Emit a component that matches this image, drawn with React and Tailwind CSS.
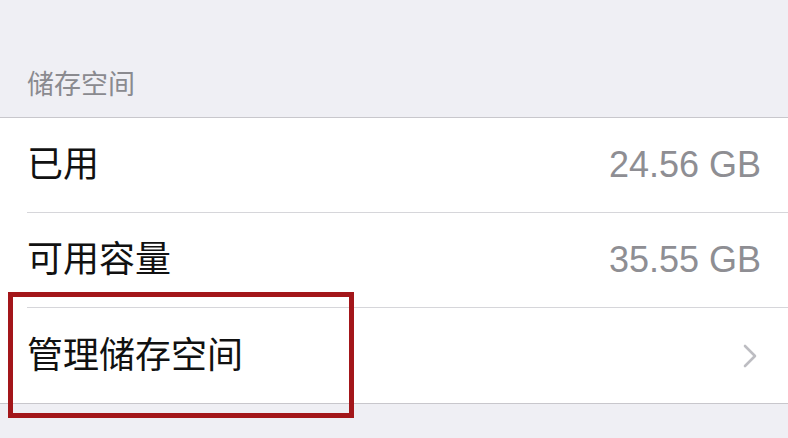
import React from 'react';

const rows = [
  { label: '已用', value: '24.56 GB' },
  { label: '可用容量', value: '35.55 GB' },
  { label: '管理储存空间', chevron: true },
];

const App = () => {
  return (
    <div
      className="relative w-[788px] h-[438px] overflow-hidden bg-[#efeff4]"
      style={{ fontFamily: '"Liberation Sans", "Noto Sans CJK SC", sans-serif' }}
    >
      <div className="h-[117px] flex items-end pl-[27px] pb-[16px]">
        <span className="text-[27px] leading-[32px] text-[#8a8a8f]">储存空间</span>
      </div>

      <div className="bg-white border-y border-[#c8c7cc]">
        {rows.map((row, i) => (
          <div key={row.label} className="pl-[27px]">
            <div
              className={`h-[95px] flex items-center justify-between pr-[27px] ${
                i < rows.length - 1 ? 'border-b border-[#d6d6da]' : ''
              }`}
            >
              <span className="text-[36px] leading-none text-[#111]">{row.label}</span>
              {row.chevron ? (
                <svg width="16" height="26" viewBox="0 0 16 26" className="mr-[3px]">
                  <path d="M3 3 L13 13 L3 23" fill="none" stroke="#bdbdc2" strokeWidth="2.6" strokeLinecap="round" strokeLinejoin="round" />
                </svg>
              ) : (
                <span className="text-[36px] leading-none text-[#8e8e93]">{row.value}</span>
              )}
            </div>
          </div>
        ))}
      </div>

      {/* annotation box */}
      <div className="absolute left-[8px] top-[292px] w-[346px] h-[126px] border-[5px] border-[#a3161a]" />
    </div>
  );
};

export default App;
